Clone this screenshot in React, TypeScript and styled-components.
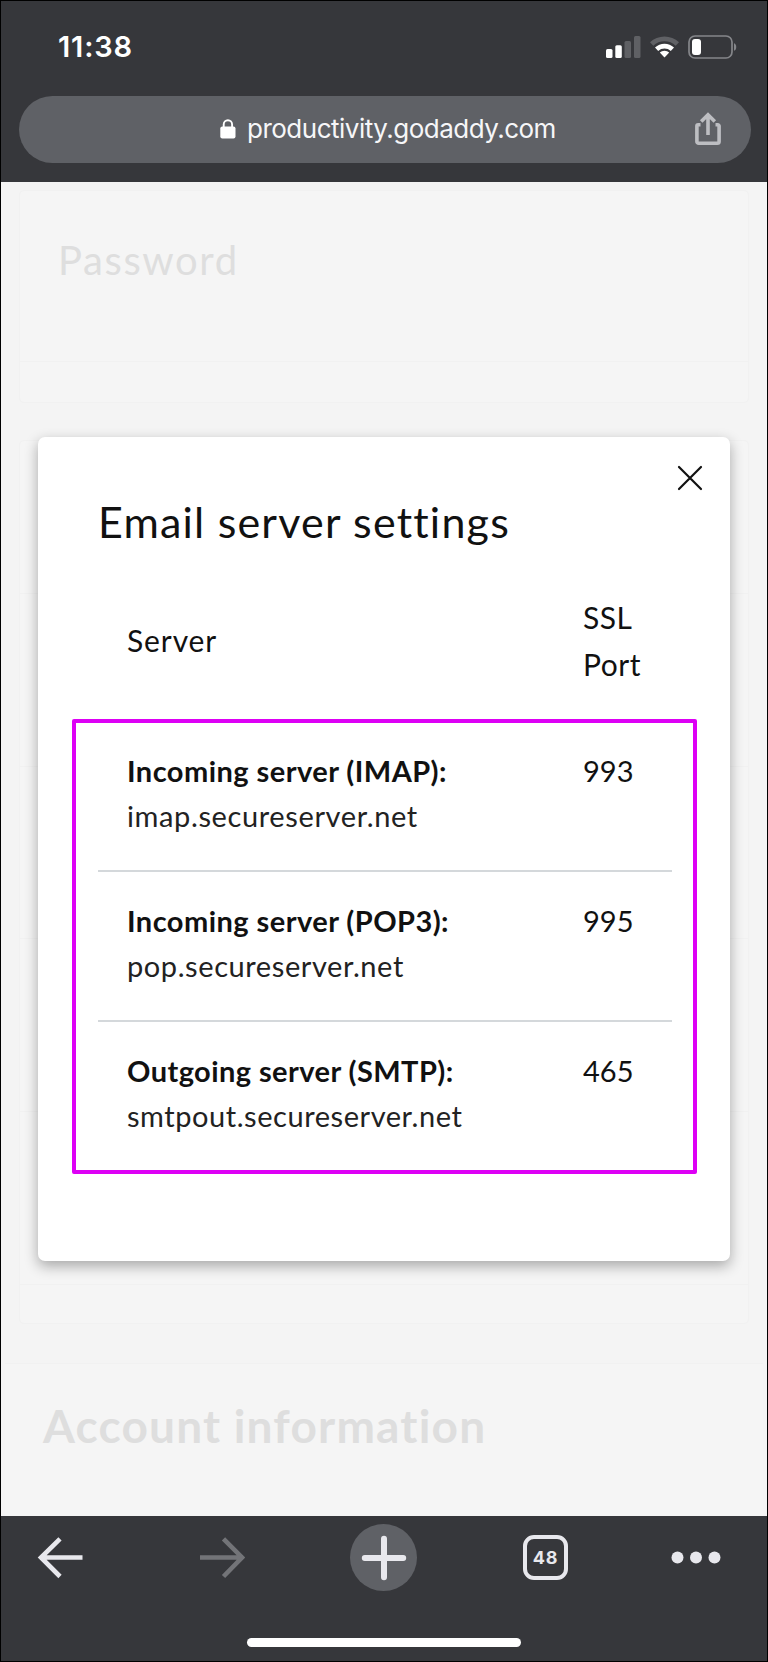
import React from "react";
import styled, { createGlobalStyle } from "styled-components";

const Global = createGlobalStyle`
  *, *::before, *::after { box-sizing: border-box; }
  body { margin: 0; background: #000; }
`;

const sans = `Inter, "Liberation Sans", sans-serif`;
const brand = `Lato, "Open Sans", sans-serif`;

const Screen = styled.div`
  width: 768px;
  height: 1662px;
  display: flex;
  flex-direction: column;
  border: 1px solid #000;
  background: #36373b;
  font-family: ${brand};
  overflow: hidden;
`;

const Header = styled.header`
  height: 181px;
  flex: none;
  display: flex;
  flex-direction: column;
`;

const StatusBar = styled.div`
  height: 95px;
  padding: 15px 30px 18px 57px;
  display: flex;
  align-items: center;
  justify-content: space-between;
`;

const Clock = styled.span`
  font: 600 29px/62px ${sans};
  letter-spacing: 0.8px;
  color: #fff;
`;

const StatusIcons = styled.div`
  display: flex;
  align-items: center;
  gap: 9px;
`;

const AddressBar = styled.div`
  height: 67px;
  margin: 0 16px 0 18px;
  padding: 0 30px 0 201px;
  border-radius: 34px;
  background: #5f6166;
  display: flex;
  align-items: center;
`;

const Url = styled.span`
  flex: 1;
  margin-left: 11px;
  font: 400 26px/60px ${sans};
  letter-spacing: -0.5px;
  color: #f6f6f8;
  white-space: nowrap;
  padding-bottom: 2px;
`;

const Page = styled.main`
  height: 1334px;
  flex: none;
  position: relative;
  background: #f4f4f4;
  display: flex;
  flex-direction: column;
  overflow: hidden;
`;

const FormCard = styled.section<{ $height: number; $gap: number }>`
  height: ${(p) => p.$height}px;
  flex: none;
  margin: ${(p) => p.$gap}px 18px 0;
  border: 1px solid #f1f1f1;
  border-radius: 5px;
  background: #f5f5f5;
`;

const FormRow = styled.div<{ $height: number }>`
  height: ${(p) => p.$height}px;
  padding: 43px 38px 0;
  border-bottom: 1px solid #f1f1f1;
`;

const FieldLabel = styled.div`
  font-size: 40px;
  line-height: 52px;
  letter-spacing: 1.6px;
  color: #dedede;
`;

const AccountSection = styled.section`
  flex: 1;
  margin: 39px 4px 0;
  padding: 34px 38px;
  border-top: 1px solid #f1f1f1;
  background: #f5f5f5;
`;

const AccountTitle = styled.h2`
  margin: 0;
  font-size: 46px;
  line-height: 56px;
  font-weight: 700;
  letter-spacing: 1.2px;
  color: #dedede;
  white-space: nowrap;
`;

const Modal = styled.div`
  position: absolute;
  top: 255px;
  left: 37px;
  width: 692px;
  height: 824px;
  padding: 59px 58px 0 60px;
  border-radius: 7px;
  background: #fff;
  box-shadow: 0 5px 14px rgba(0, 0, 0, 0.32);
  color: #111;
`;

const CloseButton = styled.button`
  position: absolute;
  top: 28px;
  right: 27px;
  width: 26px;
  height: 26px;
  padding: 0;
  border: 0;
  background: none;
  svg { display: block; }
`;

const ModalTitle = styled.h1`
  margin: 0 0 46px;
  font-size: 43px;
  line-height: 52px;
  font-weight: 400;
  letter-spacing: 1.2px;
  white-space: nowrap;
`;

const TableRow = styled.div`
  display: grid;
  grid-template-columns: 1fr 89px;
  padding-left: 29px;
`;

const TableHead = styled(TableRow)`
  align-items: center;
  height: 93px;
  margin-bottom: 35px;
  font-size: 30px;
  line-height: 46.5px;
`;

const ServerRow = styled(TableRow)<{ $last: boolean }>`
  height: 150px;
  padding-top: 27px;
  border-bottom: ${(p) => (p.$last ? "0" : "2px solid #d4d8db")};
  font-size: 29px;
  line-height: 44.5px;
`;

const Label = styled.span<{ $spacing: number }>`
  letter-spacing: ${(p) => p.$spacing}px;
`;

const ServerName = styled.div<{ $spacing: number }>`
  font-weight: 700;
  letter-spacing: ${(p) => p.$spacing}px;
  white-space: nowrap;
`;

const ServerHost = styled.div<{ $spacing: number }>`
  letter-spacing: ${(p) => p.$spacing}px;
  color: #222;
  white-space: nowrap;
`;

const Highlight = styled.div`
  position: absolute;
  top: 282px;
  left: 34px;
  width: 625px;
  height: 455px;
  border: 4px solid #dd00f5;
  border-radius: 2px;
  pointer-events: none;
`;

const Footer = styled.footer`
  flex: 1;
  display: flex;
  flex-direction: column;
  align-items: center;
  justify-content: space-between;
  padding: 8px 0 14px;
`;

const Toolbar = styled.nav`
  width: 100%;
  height: 67px;
  padding-left: 25px;
  display: grid;
  grid-template-columns: repeat(4, 162px) 50px;
  align-items: center;
`;

const ToolSlot = styled.div<{ $wide?: boolean }>`
  width: ${(p) => (p.$wide ? 50 : 67)}px;
  margin-left: ${(p) => (p.$wide ? -3 : 0)}px;
  display: flex;
  justify-content: center;
`;

const NewTab = styled.div`
  width: 67px;
  height: 67px;
  border-radius: 50%;
  background: #5f6166;
  display: grid;
  place-items: center;
`;

const TabCount = styled.div`
  width: 45px;
  height: 45px;
  border: 4.5px solid #e8e8ed;
  border-radius: 11px;
  color: #e8e8ed;
  font: 700 18px/37px ${sans};
  letter-spacing: 0.8px;
  text-align: center;
`;

const HomeIndicator = styled.div`
  width: 274px;
  height: 9px;
  border-radius: 5px;
  background: #fff;
`;

const servers = [
  { name: "Incoming server (IMAP):", host: "imap.secureserver.net", port: "993", ns: 0.45, hs: 0.62 },
  { name: "Incoming server (POP3):", host: "pop.secureserver.net", port: "995", ns: 0.45, hs: 0.58 },
  { name: "Outgoing server (SMTP):", host: "smtpout.secureserver.net", port: "465", ns: 0.42, hs: 0.55 },
];

const Signal = () => (
  <svg width="35" height="22" viewBox="0 0 35 22">
    <rect x="0" y="13" width="6.5" height="9" rx="1.5" fill="#fff" />
    <rect x="9.3" y="9.3" width="6.5" height="12.7" rx="1.5" fill="#fff" />
    <rect x="18.5" y="5" width="6.5" height="17" rx="1.5" fill="#5f6064" />
    <rect x="28" y="0" width="6.5" height="22" rx="1.5" fill="#5f6064" />
  </svg>
);

const Wifi = () => (
  <svg width="29" height="22" viewBox="0 0 29 22">
    <path d="M0 6.3a21 21 0 0 1 29 0l-3.3 3.4a16.3 16.3 0 0 0-22.4 0Z" fill="#606165" />
    <path d="M5 11.6a13.8 13.8 0 0 1 19 0l-3.2 3.3a9.2 9.2 0 0 0-12.6 0Z" fill="#fff" />
    <path d="M9.8 16.6a6.8 6.8 0 0 1 9.4 0L14.5 21.5Z" fill="#fff" />
  </svg>
);

const Battery = () => (
  <svg width="49" height="24" viewBox="0 0 49 24">
    <rect x="1" y="1" width="43" height="22" rx="6" fill="none" stroke="#85868a" strokeWidth="1.7" />
    <rect x="4" y="4" width="9" height="16" rx="3" fill="#fff" />
    <path d="M46 8.2c3 1 3 6.6 0 7.6Z" fill="#85868a" />
  </svg>
);

const Lock = () => (
  <svg width="16" height="21" viewBox="0 0 16 21">
    <rect x="0.3" y="7.5" width="15.2" height="12" rx="2" fill="#fff" />
    <path d="M3.7 8.5V5.5a4.2 4.2 0 0 1 8.4 0v3" fill="none" stroke="#fff" strokeWidth="1.9" />
  </svg>
);

const Share = () => (
  <svg width="26" height="36" viewBox="0 0 26 36" fill="none" stroke="#bdbec2" strokeWidth="3.6">
    <path d="M5.5 12.8H3.2a1.3 1.3 0 0 0-1.3 1.3V29.5a1.8 1.8 0 0 0 1.800 1.8h18.600a1.8 1.8 0 0 0 1.8-1.8V14.1a1.3 1.3 0 0 0-1.300-1.300H20.5" />
    <path d="M13 23V3M6.2 9.500 13 2.700l6.800 6.800" />
  </svg>
);

const Arrow = ({ color, forward }: { color: string; forward?: boolean }) => (
  <svg width="46" height="42" viewBox="0 0 46 42" fill="none" stroke={color} strokeWidth="4.6">
    {forward ? (
      <path d="M1 20.5H42M24.5 1.8 43 20.5 24.5 39.5" />
    ) : (
      <path d="M45.5 20.5H4M23 1.8 4 20.5 23 39.5" />
    )}
  </svg>
);

const Plus = () => (
  <svg width="46" height="46" viewBox="0 0 46 46" stroke="#e8e8ed" strokeWidth="6" strokeLinecap="round">
    <path d="M23 3.8V42.2M3.8 23H42.2" />
  </svg>
);

const More = () => (
  <svg width="50" height="13" viewBox="0 0 50 13" fill="#e8e8ed">
    <circle cx="6.5" cy="6.5" r="6" />
    <circle cx="25" cy="6.5" r="6" />
    <circle cx="43.5" cy="6.5" r="6" />
  </svg>
);

export default function App() {
  return (
    <Screen>
      <Global />
      <Header>
        <StatusBar>
          <Clock>11:38</Clock>
          <StatusIcons>
            <Signal />
            <Wifi />
            <Battery />
          </StatusIcons>
        </StatusBar>
        <AddressBar>
          <Lock />
          <Url>productivity.godaddy.com</Url>
          <Share />
        </AddressBar>
      </Header>
      <Page>
        <FormCard $height={213} $gap={8}>
          <FormRow $height={171}>
            <FieldLabel>Password</FieldLabel>
          </FormRow>
        </FormCard>
        <FormCard $height={884} $gap={37}>
          <FormRow $height={153} />
          <FormRow $height={173} />
          <FormRow $height={172} />
          <FormRow $height={173} />
          <FormRow $height={173} />
        </FormCard>
        <AccountSection>
          <AccountTitle>Account information</AccountTitle>
        </AccountSection>
        <Modal role="dialog">
          <CloseButton aria-label="Close">
            <svg width="26" height="26" viewBox="0 0 26 26" stroke="#111" strokeWidth="2.2" strokeLinecap="round">
              <path d="M2 2 24 24M24 2 2 24" />
            </svg>
          </CloseButton>
          <ModalTitle>Email server settings</ModalTitle>
          <TableHead>
            <Label $spacing={0.9}>Server</Label>
            <Label $spacing={0.5}>SSL Port</Label>
          </TableHead>
          {servers.map((s, i) => (
            <ServerRow key={s.name} $last={i === servers.length - 1}>
              <div>
                <ServerName $spacing={s.ns}>{s.name}</ServerName>
                <ServerHost $spacing={s.hs}>{s.host}</ServerHost>
              </div>
              <Label $spacing={0}>{s.port}</Label>
            </ServerRow>
          ))}
          <Highlight />
        </Modal>
      </Page>
      <Footer>
        <Toolbar>
          <ToolSlot>
            <Arrow color="#e8e8ed" />
          </ToolSlot>
          <ToolSlot>
            <Arrow color="#737478" forward />
          </ToolSlot>
          <ToolSlot>
            <NewTab>
              <Plus />
            </NewTab>
          </ToolSlot>
          <ToolSlot>
            <TabCount>48</TabCount>
          </ToolSlot>
          <ToolSlot $wide>
            <More />
          </ToolSlot>
        </Toolbar>
        <HomeIndicator />
      </Footer>
    </Screen>
  );
}
